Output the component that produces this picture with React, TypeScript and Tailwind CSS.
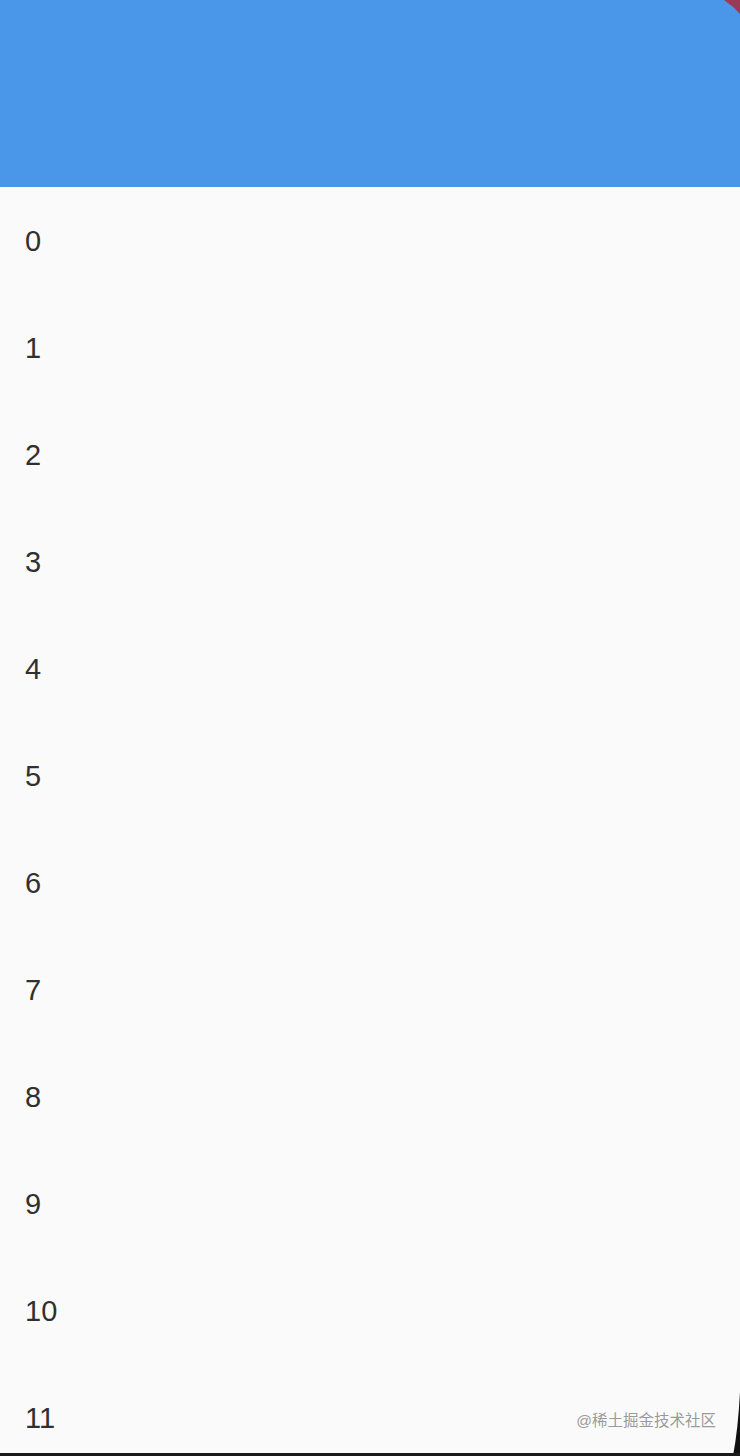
import React from 'react';

const items = Array.from({ length: 12 }, (_, i) => i);

export default function App() {
  return (
    <div className="relative w-[740px] h-[1456px] overflow-hidden bg-[#fafafa]" style={{ fontFamily: '"Liberation Sans", Arial, sans-serif' }}>
      {/* app bar */}
      <div className="h-[187px] bg-[#4a97ea]" />

      {/* list */}
      <div className="flex flex-col">
        {items.map(i => (
          <div key={i} className="h-[107px] flex items-center pl-[25px] pt-[2px] text-[29px] text-[#303030]">
            {i}
          </div>
        ))}
      </div>

      {/* watermark */}
      <div
        className="absolute right-[24px] bottom-[24px] text-[15.5px] text-[#9a9a9a] [text-shadow:0_0_2px_#fff]"
        style={{ fontFamily: '"Liberation Sans", "Noto Sans CJK SC", sans-serif' }}
      >
        @稀土掘金技术社区
      </div>

      {/* screen corners */}
      <svg className="absolute inset-0 pointer-events-none" width="740" height="1456" viewBox="0 0 740 1456">
        <path d="M724 0 L740 0 L740 14 Q733 6 724 0 Z" fill="#9b3a55" />
        <path d="M740 1392 Q738 1430 733 1456 L740 1456 Z" fill="#111" />
        <rect x="0" y="1453" width="740" height="3" fill="#1a1a1a" />
      </svg>
    </div>
  );
}
